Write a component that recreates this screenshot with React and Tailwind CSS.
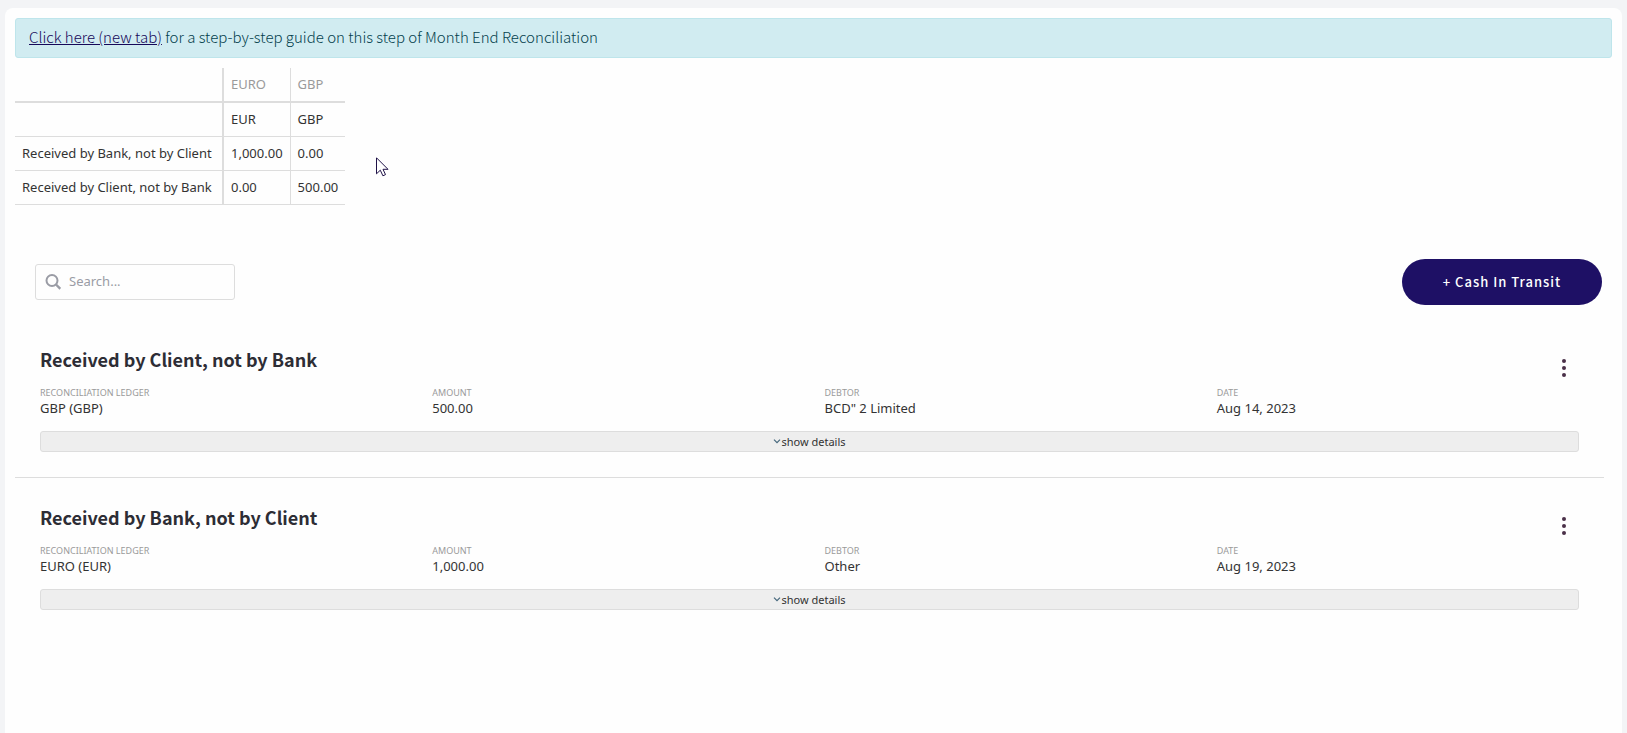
import React, { useState } from 'react';

const totals = [
  { label: 'Received by Bank, not by Client', eur: '1,000.00', gbp: '0.00' },
  { label: 'Received by Client, not by Bank', eur: '0.00', gbp: '500.00' },
];

const items = [
  {
    title: 'Received by Client, not by Bank',
    fields: [
      ['Reconciliation Ledger', 'GBP (GBP)'],
      ['Amount', '500.00'],
      ['Debtor', 'BCD" 2 Limited'],
      ['Date', 'Aug 14, 2023'],
    ],
  },
  {
    title: 'Received by Bank, not by Client',
    fields: [
      ['Reconciliation Ledger', 'EURO (EUR)'],
      ['Amount', '1,000.00'],
      ['Debtor', 'Other'],
      ['Date', 'Aug 19, 2023'],
    ],
  },
];

const SearchIcon = () => (
  <svg width="16" height="16" viewBox="0 0 16 16" fill="none" stroke="currentColor" aria-hidden="true">
    <circle cx="7" cy="6.5" r="5.5" strokeWidth="2" />
    <path d="M11 10.5l4.3 4.3" strokeWidth="2.4" />
  </svg>
);

const DotsIcon = () => (
  <svg width="4" height="18" viewBox="0 0 4 18" fill="currentColor" aria-hidden="true">
    <circle cx="2" cy="2" r="2" />
    <circle cx="2" cy="9" r="2" />
    <circle cx="2" cy="16" r="2" />
  </svg>
);

const ChevronIcon = () => (
  <svg width="8" height="5" viewBox="0 0 8 5" fill="none" stroke="#45677c" strokeWidth="1.2" aria-hidden="true">
    <path d="M1 0.7l3 3 3-3" />
  </svg>
);

const Pointer = () => (
  <svg className="pointer-events-none absolute left-[376px] top-[157px]" width="13" height="20" viewBox="0 0 13 20" aria-hidden="true">
    <path d="M0.5 0.8v16l3.8-3.6 2.6 5.6 2.6-1.2-2.5-5.3h5z" fill="#fff" stroke="#1f1147" strokeWidth="1" />
  </svg>
);

const TransitItem = ({ item }) => (
  <section className="border-b border-[#dddddd] px-[25px] pt-[23px] pb-[25px] last:border-b-0">
    <div className="flex items-start justify-between">
      <h2 className="font-['Noto_Sans_CJK_SC',sans-serif] text-lg leading-8 font-bold text-[#2d2d35]">{item.title}</h2>
      <button type="button" aria-label="More actions" className="mt-4 mr-[13px] cursor-pointer text-[#4a3048]">
        <DotsIcon />
      </button>
    </div>
    <dl className="mt-[10px] grid grid-cols-4 gap-[30px]">
      {item.fields.map(([label, value]) => (
        <div key={label}>
          <dt className="text-[9px] leading-3 text-[#9a9a9a] uppercase">{label}</dt>
          <dd className="text-[13px] leading-[18px] text-[#333333]">{value}</dd>
        </div>
      ))}
    </dl>
    <button type="button" className="mt-[14px] flex w-full cursor-pointer items-center justify-center rounded-[3px] border border-[#dddddd] bg-[#eeeeee] text-[11px] leading-[19px] text-[#333333]">
      <ChevronIcon />
      show details
    </button>
  </section>
);

const App = () => {
  const [search, setSearch] = useState('');

  return (
    <div className="relative flex min-h-screen flex-col bg-[#f3f4f6] px-[5px] pt-2 font-['Noto_Sans',sans-serif] text-[#333333]">
      <main className="flex-1 rounded-t-lg bg-[#fefefe] p-[10px]">
        {/* Guide banner */}
        <div className="rounded-[3px] border border-[#bee5eb] bg-[#d1ecf1] px-[13px] pt-[6px] pb-2 font-['Noto_Sans_CJK_SC',sans-serif] text-[15px] leading-6 font-light text-[#04414d]">
          <a href="#guide" className="text-[#160859] underline">Click here (new tab)</a> for a step-by-step guide on this step of Month End Reconciliation
        </div>

        {/* Totals per ledger */}
        <table className="mt-[10px] border-separate border-spacing-0 text-left text-[13px] leading-[17px] [&_td]:border-b [&_td]:border-[#dddddd] [&_td]:px-[7px] [&_td]:py-2 [&_th]:border-[#dddddd] [&_th]:px-[7px] [&_th]:py-2 [&_th]:font-normal">
          <thead className="text-[#9a9a9a]">
            <tr>
              <td className="w-[209px] min-w-[209px] border-r-2 border-b-2!" />
              <th scope="col" className="border-r border-b-2">EURO</th>
              <th scope="col" className="border-b-2">GBP</th>
            </tr>
          </thead>
          <tbody>
            <tr>
              <td className="border-r-2" />
              <td className="border-r">EUR</td>
              <td>GBP</td>
            </tr>
            {totals.map((row) => (
              <tr key={row.label}>
                <th scope="row" className="border-r-2 border-b">{row.label}</th>
                <td className="border-r">{row.eur}</td>
                <td>{row.gbp}</td>
              </tr>
            ))}
          </tbody>
        </table>

        {/* Toolbar */}
        <div className="mt-[54px] flex items-center justify-between pr-[10px] pl-5">
          <label className="flex h-9 w-[200px] items-center gap-2 rounded-[3px] border border-[#dddddd] px-[9px] text-[#9a9ca5]">
            <SearchIcon />
            <input
              type="text"
              aria-label="Search"
              placeholder="Search..."
              value={search}
              onChange={(e) => setSearch(e.target.value)}
              className="min-w-0 flex-1 text-[13px] text-[#333333] outline-none placeholder:text-[#9a9ca5]"
            />
          </label>
          <button type="button" className="h-[46px] w-[200px] cursor-pointer rounded-full bg-[#1e1065] font-['Noto_Sans_CJK_SC',sans-serif] text-[13px] font-medium tracking-[1px] text-white">
            + Cash In Transit
          </button>
        </div>

        <div className="mt-[15px] mr-2">
          {items.map((item) => <TransitItem key={item.title} item={item} />)}
        </div>
      </main>
      <Pointer />
    </div>
  );
};

export default App;
